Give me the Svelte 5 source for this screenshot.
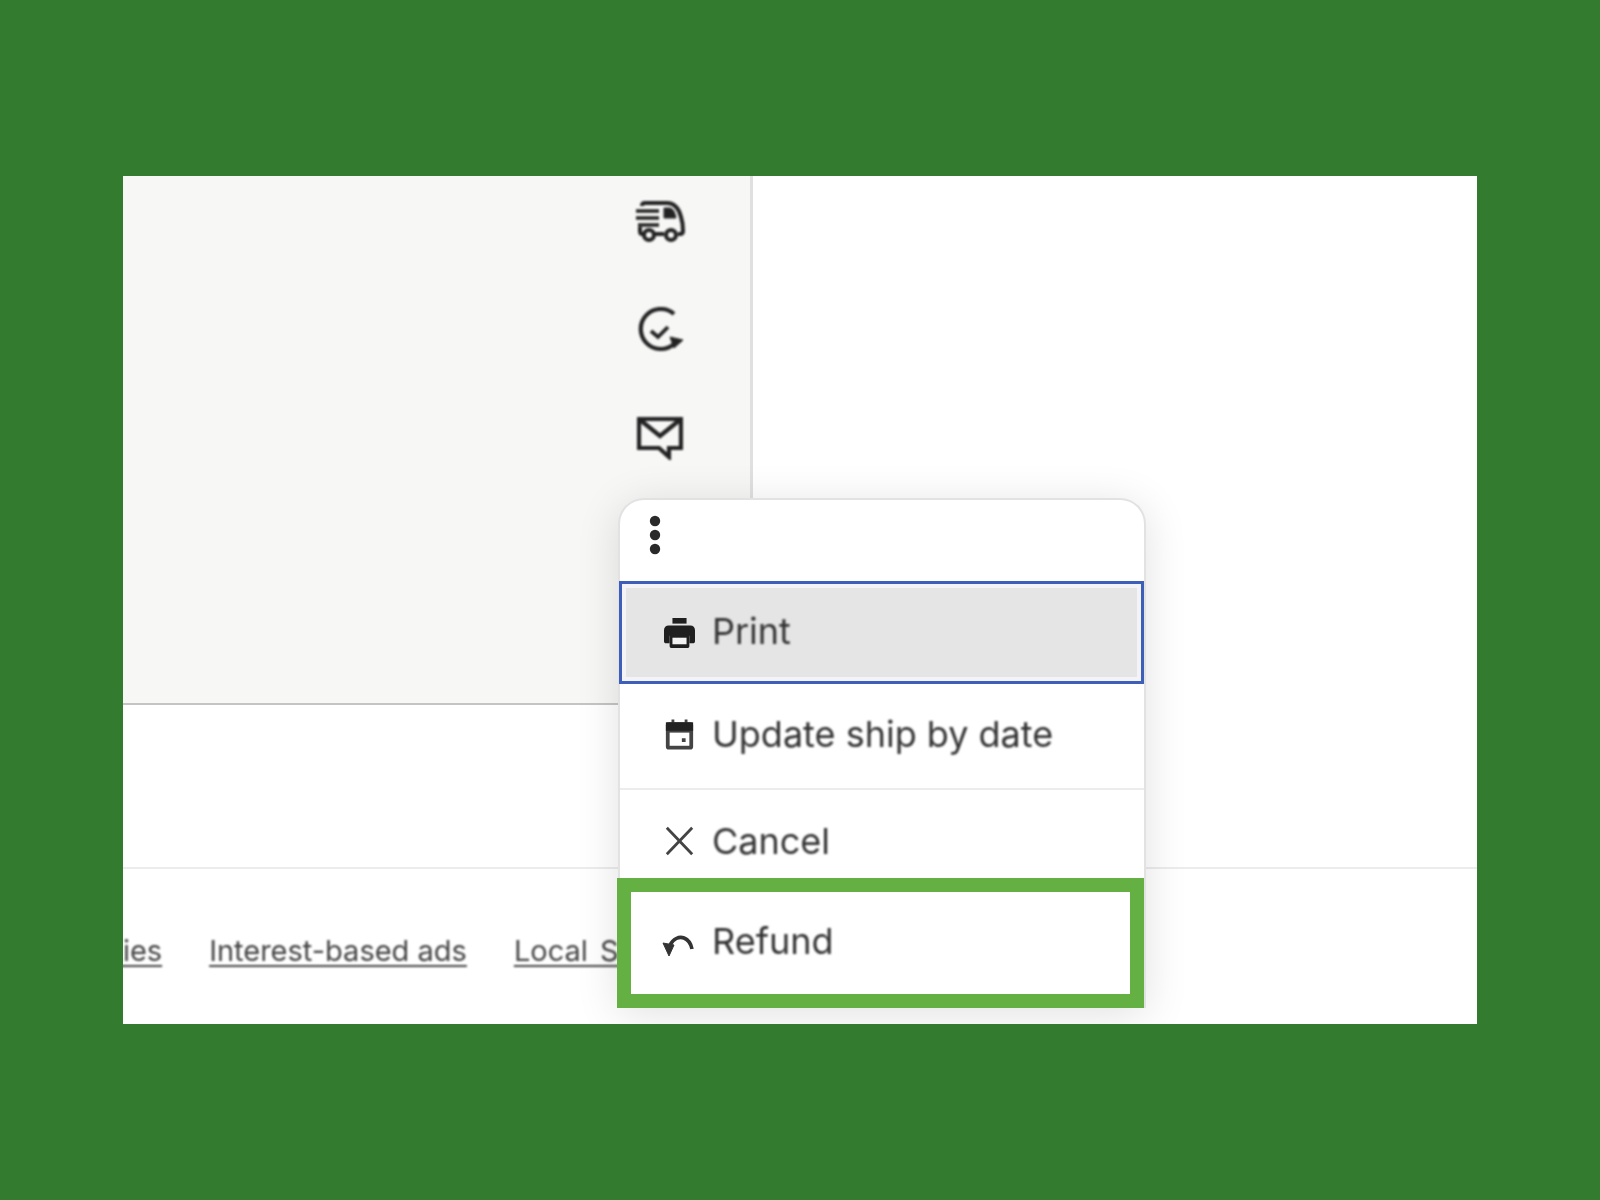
<script>
	const links = ['Cookies', 'Interest-based ads', 'Local Shops'];
</script>

<div class="page">
	<div class="panel">
		<div class="top">
			<div class="side">
				<div class="actions">
					<svg class="truck" viewBox="0 0 50 42" fill="none" stroke="#222" stroke-width="4">
						<path d="M7 6c0-2 1-3 3-3h22c8 0 12 6 14 14 2 6 2 11 2 14 0 2-1 3-3 3h-2M29 34H20M8 34H7c-1 0-2-1-2-3v-4" stroke-linejoin="round" />
						<path d="M1 11h23M1 18h23M3 25h21" stroke-width="3.400" />
						<path d="M29 8h5c4 0 6 4 7 10H29z" fill="#222" stroke-width="1" />
						<circle cx="14" cy="35" r="5" />
						<circle cx="36" cy="35" r="5" />
					</svg>
					<svg class="clock" viewBox="0 0 48 48" fill="none" stroke="#222" stroke-width="4.200">
						<path d="M38 7A20 20 0 1 0 38 37" />
						<path d="M15 24l7 6 10-10" stroke-width="3.800" />
						<path d="M34 30l13 3-9 8z" fill="#222" stroke-width="1" />
					</svg>
					<svg class="mail" viewBox="0 0 46 44" fill="none" stroke="#222" stroke-width="4.200">
						<path d="M2 3h42v29H32v9l-10-9H2z" stroke-linejoin="miter" />
						<path d="M2 3l21 17L44 3" />
					</svg>
				</div>
			</div>
		</div>
		<div class="middle"></div>
		<div class="footer">
			{#each links as link}
				<span class="link">{link}</span>
			{/each}
		</div>

		<div class="menu">
			<div class="menu-head">
				<svg class="dots" viewBox="0 0 12 40" fill="#2a2a2a">
					<circle cx="6" cy="6" r="5.200" />
					<circle cx="6" cy="20" r="5.200" />
					<circle cx="6" cy="34" r="5.200" />
				</svg>
			</div>

			<div class="item print">
				<svg class="icon" viewBox="0 0 33 32" fill="#1f1f1f">
					<path d="M9 0h15v6H9z" />
					<path d="M5 8h23c3 0 5 2 5 5v12c0 1-1 2-2 2h-4v-8H6v8H2c-1 0-2-1-2-2V13c0-3 2-5 5-5z" />
					<path d="M6 18h21v12c0 1-1 2-2 2H8c-1 0-2-1-2-2z" />
					<path d="M9 21h15v7H9z" fill="#f2f2f2" />
				</svg>
				<span>Print</span>
			</div>

			<div class="item update">
				<svg class="icon" viewBox="0 0 33 32" fill="#444">
					<path d="M8 0h3v3h11V0h3v3h3c2 0 3 1 3 3v23c0 2-1 3-3 3H5c-2 0-3-1-3-3V6c0-2 1-3 3-3h3z" />
					<path d="M2 3h29v9H2z" fill="#222" />
					<path d="M6 14h21v14H6z" fill="#fff" />
					<path d="M19 20h4v4h-4z" />
				</svg>
				<span>Update ship by date</span>
			</div>

			<div class="item cancel">
				<svg class="icon" viewBox="0 0 33 32" fill="none" stroke="#444" stroke-width="3">
					<path d="M3 2l27 28M30 2L3 30" />
				</svg>
				<span>Cancel</span>
			</div>

			<div class="item refund">
				<svg class="icon small" viewBox="0 0 33 26" fill="none" stroke="#333" stroke-width="3.600">
					<path d="M8 13C11 7 17 4 22 6c5 2 7 6 8 11" />
					<path d="M1 11l11 2-5 11z" fill="#333" stroke-width="1" />
				</svg>
				<span>Refund</span>
			</div>
		</div>
	</div>
</div>

<style>
	:global(body) {
		margin: 0;
		background: #337b2e;
	}

	.page {
		box-sizing: border-box;
		width: 1600px;
		height: 1200px;
		padding: 176px 123px;
		background: #337b2e;
	}

	.panel {
		position: relative;
		height: 848px;
		display: flex;
		flex-direction: column;
		overflow: hidden;
		background: #fff;
		font-family: Inter, 'Liberation Sans', sans-serif;
		color: #4a4a4a;
	}

	.top {
		height: 529px;
		flex: none;
	}

	.side {
		box-sizing: border-box;
		width: 630px;
		height: 100%;
		display: flex;
		justify-content: flex-end;
		background: #f7f7f6;
		border-right: 3px solid #e0e0e0;
		border-bottom: 2px solid #c4c4c4;
		padding-right: 64px;
	}

	.actions {
		display: flex;
		flex-direction: column;
		align-items: center;
		width: 52px;
		padding-top: 24px;
		filter: blur(0.9px);
	}

	.truck {
		width: 50px;
		height: 42px;
	}

	.clock {
		width: 48px;
		height: 48px;
		margin-top: 65px;
	}

	.mail {
		width: 46px;
		height: 44px;
		margin-top: 61px;
	}

	.middle {
		height: 162px;
		flex: none;
		border-bottom: 2px solid #ececec;
	}

	.footer {
		display: flex;
		gap: 47px;
		margin-left: -72px;
		padding-top: 65px;
		font-size: 29px;
		line-height: 34px;
		color: #444;
		white-space: nowrap;
		filter: blur(0.8px);
	}

	.link {
		text-decoration: underline;
		text-decoration-thickness: 2px;
		text-underline-offset: 4px;
	}

	.link:last-child {
		word-spacing: 4px;
	}

	.menu {
		position: absolute;
		left: 495px;
		top: 322px;
		width: 528px;
		height: 510px;
		box-sizing: border-box;
		display: flex;
		flex-direction: column;
		background: #fff;
		border: 2px solid #e2e2e2;
		border-bottom: 0;
		border-radius: 26px 26px 0 0;
		box-shadow: 0 6px 44px rgba(0, 0, 0, 0.12);
	}

	.menu-head {
		height: 81px;
		flex: none;
		box-sizing: border-box;
		padding: 15px 0 0 29px;
	}

	.dots {
		display: block;
		width: 12px;
		height: 40px;
		filter: blur(0.6px);
	}

	.item {
		box-sizing: border-box;
		display: flex;
		align-items: center;
		gap: 16px;
		padding-left: 42px;
		font-size: 36px;
		color: #333;
		flex: none;
	}

	.item span {
		filter: blur(0.9px);
	}

	.icon {
		width: 33px;
		height: 32px;
		flex: none;
		filter: blur(0.6px);
	}

	.icon.small {
		height: 26px;
		margin-top: 8px;
	}

	.print {
		height: 103px;
		margin: 0 0 0 -1px;
		border: 3px solid #3d5fb9;
		outline: 4px solid #f4f4f8;
		outline-offset: -7px;
		background: #e5e5e5;
		padding-bottom: 4px;
	}

	.print svg {
		width: 31px;
		margin: 4px 1px 0 0;
	}

	.update {
		height: 106px;
		border-bottom: 2px solid #ececec;
		padding-bottom: 4px;
	}

	.update svg {
		width: 31px;
		height: 31px;
		margin: 0 1px 0 2px;
	}

	.cancel {
		height: 88px;
		padding-top: 14px;
	}

	.cancel svg {
		width: 31px;
		margin: 0 1px 0 2px;
	}

	.refund {
		height: 130px;
		margin-left: -3px;
		margin-right: 0;
		border: 14px solid #65b043;
		padding-left: 31px;
		padding-bottom: 4px;
		background: #fff;
		gap: 17px;
	}
</style>
